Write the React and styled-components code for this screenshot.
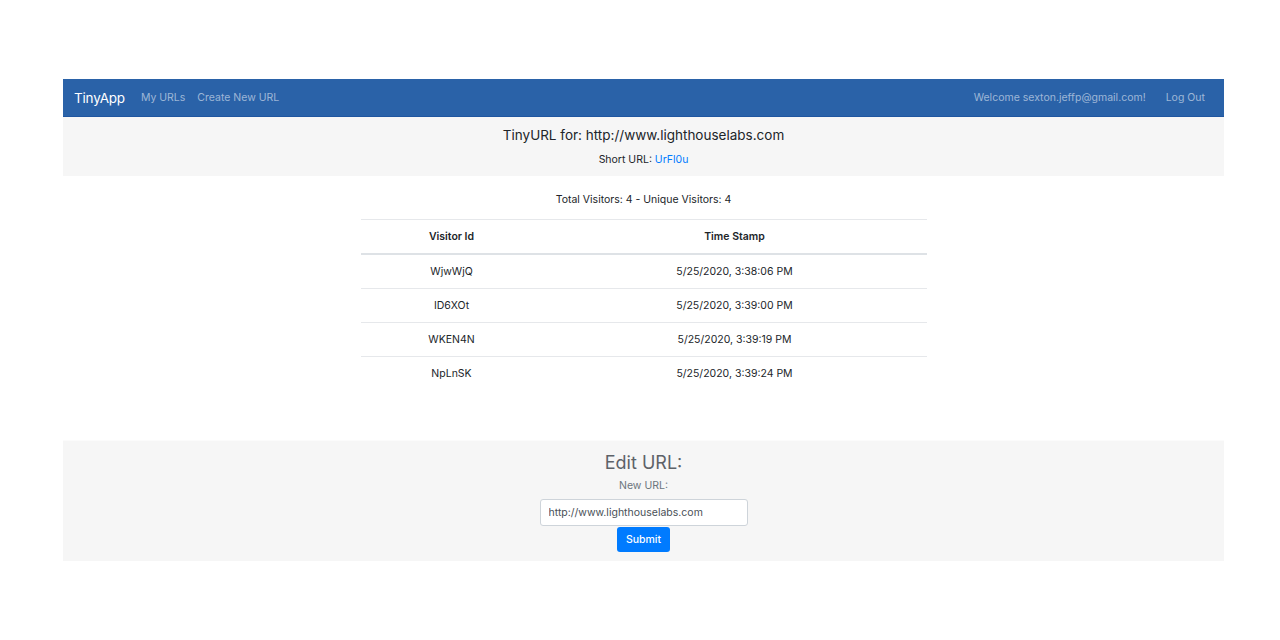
import React from "react";
import styled, { createGlobalStyle } from "styled-components";

const GlobalStyle = createGlobalStyle`
  body {
    margin: 0;
    background: #ffffff;
    font-family: Inter, "Liberation Sans", sans-serif;
    color: #212529;
  }
`;

const Page = styled.div`
  margin: 79px 56px 0 63px;
  display: flex;
  flex-direction: column;
`;

const NavBar = styled.nav`
  height: 37px;
  background: #2a62a8;
  border-bottom: 1px solid #1f56a0;
  display: flex;
  align-items: center;
  padding: 0 19px 0 11px;
`;

const Brand = styled.a`
  color: #ffffff;
  font-size: 13.5px;
  margin-right: 16px;
  letter-spacing: -0.2px;
`;

const NavLink = styled.a`
  color: rgba(255, 255, 255, 0.55);
  font-size: 10.5px;
  margin-right: ${(p) => p.$gap ?? 12}px;
`;

const Spacer = styled.div`
  flex: 1;
`;

const Jumbo = styled.section`
  height: 59px;
  background: #f6f6f6;
  display: flex;
  flex-direction: column;
  align-items: center;
`;

const Title = styled.h4`
  margin: 9px 0 0;
  font-size: 13.5px;
  font-weight: 400;
  line-height: 18px;
`;

const ShortUrl = styled.p`
  margin: 9px 0 0;
  font-size: 10.5px;
  line-height: 14px;
`;

const Link = styled.a`
  color: #007bff;
`;

const Stats = styled.p`
  margin: 17px 0 0;
  text-align: center;
  font-size: 10.5px;
  line-height: 14px;
`;

const Table = styled.table`
  margin: 12px auto 0;
  width: 566px;
  border-collapse: collapse;
  font-size: 10.5px;
`;

const Th = styled.th`
  width: ${(p) => p.$w}px;
  height: 33px;
  padding: 0;
  text-align: center;
  font-weight: 600;
  border-top: 1px solid #e6e8eb;
  border-bottom: 2px solid #dee2e6;
`;

const Td = styled.td`
  height: 33px;
  padding: 0;
  text-align: center;
  border-top: ${(p) => (p.$first ? "none" : "1px solid #e6e8eb")};
`;

const EditSection = styled.section`
  margin-top: 50px;
  height: 120px;
  background: #f6f6f6;
  border-top: 1px solid #fbfbfb;
  display: flex;
  flex-direction: column;
  align-items: center;
`;

const EditTitle = styled.h3`
  margin: 11px 0 0;
  font-size: 18px;
  font-weight: 400;
  line-height: 22px;
  color: #5d6268;
`;

const Label = styled.label`
  margin-top: 5px;
  font-size: 10.5px;
  line-height: 14px;
  color: #6c757d;
`;

const Input = styled.input`
  margin-top: 6px;
  box-sizing: border-box;
  width: 208px;
  height: 27px;
  padding: 0 8px;
  border: 1px solid #ced4da;
  border-radius: 3px;
  background: #ffffff;
  font-family: inherit;
  font-size: 10.5px;
  color: #495057;
  outline: none;
`;

const Button = styled.button`
  margin-top: 1px;
  width: 53px;
  height: 25px;
  padding: 0;
  border: none;
  border-radius: 3px;
  background: #007bff;
  color: #ffffff;
  font-family: inherit;
  font-size: 10.5px;
  font-weight: 500;
`;

const visits = [
  { id: "WjwWjQ", time: "5/25/2020, 3:38:06 PM" },
  { id: "ID6XOt", time: "5/25/2020, 3:39:00 PM" },
  { id: "WKEN4N", time: "5/25/2020, 3:39:19 PM" },
  { id: "NpLnSK", time: "5/25/2020, 3:39:24 PM" },
];

function App() {
  return (
    <>
      <GlobalStyle />
      <Page>
        <NavBar>
          <Brand>TinyApp</Brand>
          <NavLink>My URLs</NavLink>
          <NavLink>Create New URL</NavLink>
          <Spacer />
          <NavLink $gap={20}>Welcome sexton.jeffp@gmail.com!</NavLink>
          <NavLink $gap={0}>Log Out</NavLink>
        </NavBar>
        <Jumbo>
          <Title>TinyURL for: http://www.lighthouselabs.com</Title>
          <ShortUrl>
            Short URL: <Link>UrFl0u</Link>
          </ShortUrl>
        </Jumbo>
        <Stats>Total Visitors: 4 - Unique Visitors: 4</Stats>
        <Table>
          <thead>
            <tr>
              <Th $w={182}>Visitor Id</Th>
              <Th $w={384}>Time Stamp</Th>
            </tr>
          </thead>
          <tbody>
            {visits.map((v, i) => (
              <tr key={v.id}>
                <Td $first={i === 0}>{v.id}</Td>
                <Td $first={i === 0}>{v.time}</Td>
              </tr>
            ))}
          </tbody>
        </Table>
        <EditSection>
          <EditTitle>Edit URL:</EditTitle>
          <Label>New URL:</Label>
          <Input defaultValue="http://www.lighthouselabs.com" />
          <Button>Submit</Button>
        </EditSection>
      </Page>
    </>
  );
}

export default App;
